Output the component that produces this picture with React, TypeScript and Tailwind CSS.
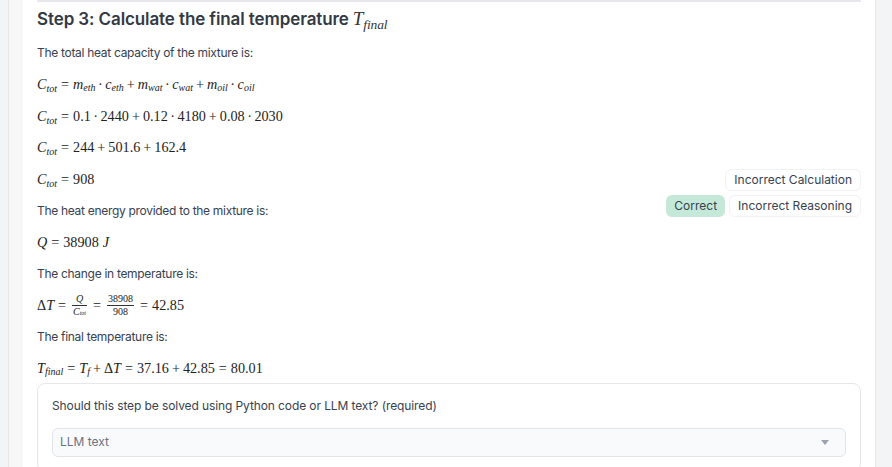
import React from "react";

const serif = { fontFamily: '"Liberation Serif", "DejaVu Serif", serif' };

function Sub({ children }: { children: React.ReactNode }) {
  return <span className="relative top-[3px] text-[10px] italic leading-none">{children}</span>;
}

function V({ children }: { children: React.ReactNode }) {
  return <span className="italic">{children}</span>;
}

function Op({ children }: { children: React.ReactNode }) {
  return <span className="mx-[3px]">{children}</span>;
}

function Eq() {
  return <span className="mx-[4px]">=</span>;
}

function Dot() {
  return <span className="mx-[2.5px]">·</span>;
}

function Ctot() {
  return (
    <span>
      <V>C</V>
      <Sub>tot</Sub>
    </span>
  );
}

function MathLine({ children }: { children: React.ReactNode }) {
  return (
    <div className="h-[31.6px] flex items-center text-[14.2px] text-[#222] whitespace-nowrap font-['Liberation_Serif',serif]">
      {children}
    </div>
  );
}

function TextLine({ children }: { children: React.ReactNode }) {
  return (
    <div className="h-[31.6px] flex items-center text-[12px] tracking-[-0.3px] text-[#374151]">{children}</div>
  );
}

function Frac({ num, den }: { num: React.ReactNode; den: React.ReactNode }) {
  return (
    <span className="inline-flex flex-col items-center align-middle mx-[2px] leading-none">
      <span className="text-[10px] px-[1px]">{num}</span>
      <span className="w-full h-[1px] bg-[#333] my-[1px]" />
      <span className="text-[10px] px-[1px]">{den}</span>
    </span>
  );
}

export default function App() {
  return (
    <div className="w-[892px] h-[467px] overflow-hidden bg-[#f4f4f5] flex font-['Inter',sans-serif]">
      <div className="w-[8px] shrink-0 bg-[#f3f4f6]" />
      <div className="w-[15px] shrink-0 bg-[#f7f7f8] border-l border-[#e5e7eb]" />
      <div className="relative flex-1 bg-white border-r border-[#e5e7eb] pl-[14px] pr-[14px]">
        <div className="h-[2px] bg-[#e5e7eb] rounded-full" />
        <div className="h-[35.2px] flex items-center text-[17px] tracking-[-0.1px] font-semibold text-[#333a44] whitespace-nowrap">
          <span>Step 3: Calculate the final temperature</span>
          <span className="ml-[4px] text-[19px] font-normal italic text-[#333]" style={serif}>
            T<span className="relative top-[4px] text-[13.5px]">final</span>
          </span>
        </div>
        <div className="flex flex-col">
          <TextLine>The total heat capacity of the mixture is:</TextLine>
          <MathLine>
            <Ctot />
            <Eq />
            <V>m</V>
            <Sub>eth</Sub>
            <Dot />
            <V>c</V>
            <Sub>eth</Sub>
            <Op>+</Op>
            <V>m</V>
            <Sub>wat</Sub>
            <Dot />
            <V>c</V>
            <Sub>wat</Sub>
            <Op>+</Op>
            <V>m</V>
            <Sub>oil</Sub>
            <Dot />
            <V>c</V>
            <Sub>oil</Sub>
          </MathLine>
          <MathLine>
            <Ctot />
            <Eq />
            0.1<Dot />2440<Op>+</Op>0.12<Dot />4180<Op>+</Op>0.08<Dot />2030
          </MathLine>
          <MathLine>
            <Ctot />
            <Eq />
            244<Op>+</Op>501.6<Op>+</Op>162.4
          </MathLine>
          <MathLine>
            <Ctot />
            <Eq />
            908
          </MathLine>
          <TextLine>The heat energy provided to the mixture is:</TextLine>
          <MathLine>
            <V>Q</V>
            <Eq />
            38908<span className="ml-[4px] italic">J</span>
          </MathLine>
          <TextLine>The change in temperature is:</TextLine>
          <MathLine>
            Δ<V>T</V>
            <Eq />
            <Frac
              num={<V>Q</V>}
              den={
                <span>
                  <V>C</V>
                  <span className="text-[6px] italic">tot</span>
                </span>
              }
            />
            <Eq />
            <Frac num="38908" den="908" />
            <Eq />
            42.85
          </MathLine>
          <TextLine>The final temperature is:</TextLine>
          <MathLine>
            <V>T</V>
            <Sub>final</Sub>
            <Eq />
            <V>T</V>
            <Sub>f</Sub>
            <Op>+</Op>Δ<V>T</V>
            <Eq />
            37.16<Op>+</Op>42.85<Eq />80.01
          </MathLine>
        </div>

        <div className="mt-[-2px] border border-[#e5e7eb] rounded-lg px-[14px] pt-[12px] pb-[14px] bg-white">
          <div className="text-[12px] tracking-[-0.1px] text-[#374151] leading-[20px]">
            Should this step be solved using Python code or LLM text? (required)
          </div>
          <div className="mt-[12px] h-[29px] rounded-md border border-[#e2e4e8] bg-[#f9fafb] flex items-center justify-between pl-[7px] pr-[16px]">
            <span className="text-[12px] text-[#6b7280]">LLM text</span>
            <span className="w-0 h-0 border-l-[4px] border-r-[4px] border-t-[5px] border-l-transparent border-r-transparent border-t-[#9ca3af]" />
          </div>
        </div>

        <div className="absolute top-[169px] right-[14px] flex flex-col items-end gap-[4px]">
          <button className="h-[22px] px-[8px] rounded-md bg-white border border-[#f1f2f4] text-[12px] text-[#374151] leading-none">
            Incorrect Calculation
          </button>
          <div className="flex gap-[4px]">
            <button className="h-[22px] px-[8px] rounded-md bg-[#c5e9d8] text-[12px] text-[#374151] leading-none">
              Correct
            </button>
            <button className="h-[22px] px-[8px] rounded-md bg-white border border-[#f1f2f4] text-[12px] text-[#374151] leading-none">
              Incorrect Reasoning
            </button>
          </div>
        </div>
      </div>
      <div className="w-[16px] shrink-0 bg-[#f3f4f6]" />
    </div>
  );
}
